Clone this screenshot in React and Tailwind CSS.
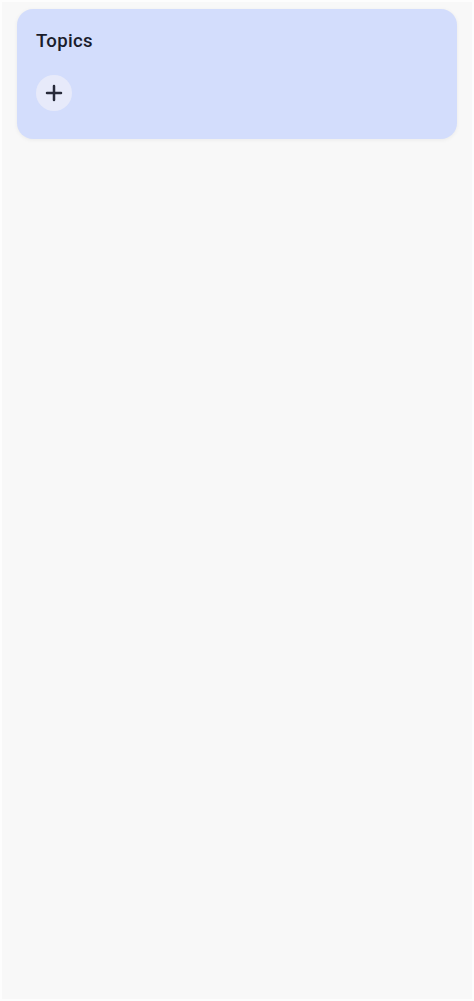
import { Plus } from "lucide-react";

export default function App() {
  return (
    <div
      className="min-h-screen bg-[#fdfdfd] p-[2px]"
      style={{ fontFamily: "Roboto, 'Noto Sans', sans-serif" }}
    >
      <div className="h-[997px] bg-[#f8f8f8] px-[15px] pt-[7px]">
        <section className="h-[130px] rounded-[16px] bg-[#d3ddfc] px-[19px] pt-[19px] shadow-[0_1px_4px_rgba(0,0,0,0.06)]">
          <h1 className="text-[18.6px] font-medium leading-[27px] tracking-[0.3px] text-[#1a1c2b]">
            Topics
          </h1>
          <button
            type="button"
            className="mt-[20px] flex h-[36px] w-[36px] items-center justify-center rounded-full bg-[#e7eafa] text-[#272a3a]"
          >
            <Plus size={24} strokeWidth={2.5} />
          </button>
        </section>
      </div>
    </div>
  );
}
